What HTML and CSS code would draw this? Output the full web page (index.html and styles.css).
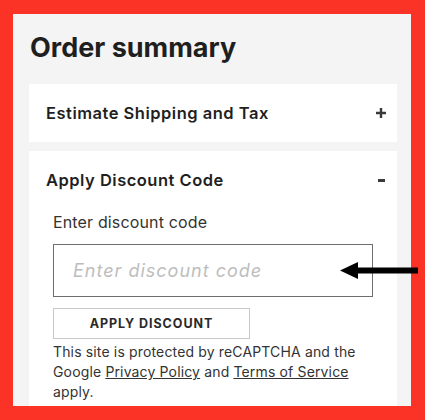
FILE: index.html
```html
<!DOCTYPE html>
<html lang="en">
<head>
<meta charset="utf-8">
<title>Order summary</title>
<link rel="stylesheet" href="styles.css">
</head>
<body>
<div class="panel">
  <h1 class="title">Order summary</h1>
  <div class="card card-closed">
    <span class="card-title">Estimate Shipping and Tax</span>
    <svg class="toggle-icon" width="10" height="10" viewBox="0 0 10 10"><path d="M5 0v10M0 5h10" stroke="#3a3a3a" stroke-width="2.4"/></svg>
  </div>
  <div class="card card-open">
    <div class="card-head">
      <span class="card-title">Apply Discount Code</span>
      <span class="minus"></span>
    </div>
    <div class="card-body">
      <label class="field-label" for="code">Enter discount code</label>
      <input class="code-input" id="code" type="text" placeholder="Enter discount code">
      <button class="apply-btn" type="button">APPLY DISCOUNT</button>
      <p class="notice">This site is protected by reCAPTCHA and the Google <a href="#">Privacy Policy</a> and <a href="#">Terms of Service</a> apply.</p>
    </div>
  </div>
</div>
<svg class="arrow" width="78" height="20" viewBox="0 0 78 20"><path d="M0 9.5L18 1v17z" fill="#000"/><rect x="16" y="6.5" width="62" height="6" fill="#000"/></svg>
</body>
</html>
```
FILE: styles.css
```css
html, body {
  margin: 0;
  height: 420px;
  overflow: hidden;
}
body {
  background: #fb3327;
  padding: 14px 14px 0 13px;
  box-sizing: border-box;
  font-family: "Inter", "Liberation Sans", sans-serif;
  color: #222;
  position: relative;
}
.panel {
  background: #f4f4f4;
  height: 392px;
  overflow: hidden;
  padding: 0 14px 0 16px;
  box-sizing: border-box;
}
.title {
  margin: 0;
  padding: 17px 0 0 1px;
  font-size: 27px;
  line-height: 34px;
  font-weight: 700;
  color: #1f1f1f;
  height: 53px;
  box-sizing: border-box;
}
.card {
  background: #fff;
}
.card-closed {
  height: 58px;
  display: flex;
  align-items: center;
  justify-content: space-between;
  padding: 0 11px 0 17px;
  margin-top: 17px;
}
.card-title {
  font-size: 16.5px;
  font-weight: 600;
  letter-spacing: 0.5px;
  color: #1f1f1f;
}
.card-open {
  margin-top: 9px;
  padding: 0 11px 40px 17px;
}
.card-head {
  display: flex;
  align-items: center;
  justify-content: space-between;
  height: 58px;
}
.minus {
  width: 7px;
  height: 3px;
  background: #3a3a3a;
  margin-right: 1px;
}
.card-body {
  padding: 0 13px 0 7px;
  display: flex;
  flex-direction: column;
  align-items: flex-start;
}
.field-label {
  font-size: 16px;
  letter-spacing: 0.15px;
  color: #333;
  line-height: 20px;
  margin-top: 3px;
}
.code-input {
  margin-top: 12px;
  width: 320px;
  height: 53px;
  box-sizing: border-box;
  border: 1.5px solid #6e6e6e;
  border-radius: 0;
  padding: 0 19px;
  font-family: inherit;
  font-size: 18px;
  font-style: italic;
  letter-spacing: 1px;
  background: #fff;
  outline: none;
}
.code-input::placeholder {
  color: #bdbdbd;
  font-style: italic;
}
.apply-btn {
  margin-top: 11px;
  width: 197px;
  height: 31px;
  background: #fff;
  border: 1px solid #c8c8c8;
  border-radius: 0;
  font-family: inherit;
  font-size: 12.5px;
  font-weight: 700;
  letter-spacing: 0.95px;
  color: #2a2a2a;
  padding: 0;
}
.notice {
  margin: 3px 0 0;
  font-size: 14px;
  line-height: 20px;
  letter-spacing: 0.15px;
  color: #333;
}
.notice a {
  color: #333;
  text-decoration: underline;
}
.arrow {
  position: absolute;
  left: 340px;
  top: 261px;
}
```
